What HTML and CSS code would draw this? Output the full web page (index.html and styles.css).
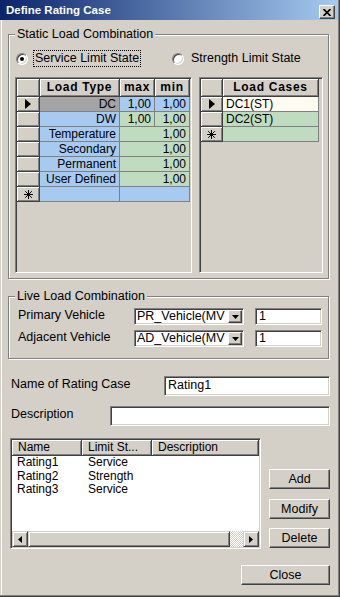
FILE: index.html
```html
<!DOCTYPE html>
<html lang="en">
<head>
    <meta charset="UTF-8">
    <meta name="viewport" content="width=device-width, initial-scale=1.0">
    <title>Define Rating Case</title>
    <link rel="stylesheet" href="styles.css">
</head>
<body>
<div class="window">
    <!-- Title Bar -->
    <div class="titlebar">
        <span class="title">Define Rating Case</span>
        <span class="close-x">
            <svg width="8" height="7" viewBox="0 0 8 7"><path d="M0.5 0 L7.5 7 M7.5 0 L0.5 7" stroke="#000" stroke-width="1.7"/></svg>
        </span>
    </div>

    <!-- Static Load Combination -->
    <div class="group static">
        <div class="legend">Static Load Combination</div>
        <div class="radios">
            <div class="radio-opt first">
                <span class="radio checked"></span>
                <span class="radio-label focus">Service Limit State</span>
            </div>
            <div class="radio-opt">
                <span class="radio"></span>
                <span class="radio-label">Strength Limit State</span>
            </div>
        </div>
        <div class="panels">
            <div class="panel panel-left">
                <div class="grid grid-left">
                    <div class="cell hd"></div>
                    <div class="cell hd">Load Type</div>
                    <div class="cell hd">max</div>
                    <div class="cell hd">min</div>

                    <div class="cell rh"><svg width="6" height="10" viewBox="0 0 6 10"><polygon points="0,0 6,5 0,10" fill="#000"/></svg></div>
                    <div class="cell gray">DC</div>
                    <div class="cell blue">1,00</div>
                    <div class="cell blue">1,00</div>

                    <div class="cell rh"></div>
                    <div class="cell blue">DW</div>
                    <div class="cell green">1,00</div>
                    <div class="cell green">1,00</div>

                    <div class="cell rh"></div>
                    <div class="cell blue">Temperature</div>
                    <div class="cell green span2">1,00</div>

                    <div class="cell rh"></div>
                    <div class="cell blue">Secondary</div>
                    <div class="cell green span2">1,00</div>

                    <div class="cell rh"></div>
                    <div class="cell blue">Permanent</div>
                    <div class="cell green span2">1,00</div>

                    <div class="cell rh"></div>
                    <div class="cell blue">User Defined</div>
                    <div class="cell green span2">1,00</div>

                    <div class="cell rh new"><svg width="9" height="9" viewBox="0 0 9 9"><path d="M4.5 0 V9 M0 4.5 H9 M1.2 1.2 L7.8 7.8 M7.8 1.2 L1.2 7.8" stroke="#000" stroke-width="1"/></svg></div>
                    <div class="cell blue"></div>
                    <div class="cell blue span2"></div>
                </div>
            </div>
            <div class="panel panel-right">
                <div class="grid grid-right">
                    <div class="cell hd"></div>
                    <div class="cell hd">Load Cases</div>

                    <div class="cell rh"><svg width="6" height="10" viewBox="0 0 6 10"><polygon points="0,0 6,5 0,10" fill="#000"/></svg></div>
                    <div class="cell cream left">DC1(ST)</div>

                    <div class="cell rh"></div>
                    <div class="cell green left">DC2(ST)</div>

                    <div class="cell rh new"><svg width="9" height="9" viewBox="0 0 9 9"><path d="M4.5 0 V9 M0 4.5 H9 M1.2 1.2 L7.8 7.8 M7.8 1.2 L1.2 7.8" stroke="#000" stroke-width="1"/></svg></div>
                    <div class="cell green left"></div>
                </div>
            </div>
        </div>
    </div>

    <!-- Live Load Combination -->
    <div class="group live">
        <div class="legend">Live Load Combination</div>
        <div class="live-row">
            <span class="live-label">Primary Vehicle</span>
            <div class="combo">
                <span class="combo-text">PR_Vehicle(MV</span>
                <span class="combo-btn"><svg width="7" height="4" viewBox="0 0 7 4"><polygon points="0,0 7,0 3.5,4" fill="#000"/></svg></span>
            </div>
            <div class="textbox num">1</div>
        </div>
        <div class="live-row second">
            <span class="live-label">Adjacent Vehicle</span>
            <div class="combo">
                <span class="combo-text">AD_Vehicle(MV</span>
                <span class="combo-btn"><svg width="7" height="4" viewBox="0 0 7 4"><polygon points="0,0 7,0 3.5,4" fill="#000"/></svg></span>
            </div>
            <div class="textbox num">1</div>
        </div>
    </div>

    <!-- Name / Description -->
    <div class="field-row name-row">
        <span class="field-label name-label">Name of Rating Case</span>
        <div class="textbox name-box">Rating1</div>
    </div>
    <div class="field-row desc-row">
        <span class="field-label desc-label">Description</span>
        <div class="textbox desc-box"></div>
    </div>

    <!-- Rating case list -->
    <div class="list-row">
        <div class="listview">
            <div class="lv-header">
                <div class="lv-col c1">Name</div>
                <div class="lv-col c2">Limit St...</div>
                <div class="lv-col c3">Description</div>
            </div>
            <div class="lv-body">
                <div class="lv-item"><span class="c1">Rating1</span><span class="c2">Service</span></div>
                <div class="lv-item"><span class="c1">Rating2</span><span class="c2">Strength</span></div>
                <div class="lv-item"><span class="c1">Rating3</span><span class="c2">Service</span></div>
            </div>
            <div class="hscroll">
                <div class="sb-btn"><svg width="4" height="7" viewBox="0 0 4 7"><polygon points="4,0 4,7 0,3.5" fill="#000"/></svg></div>
                <div class="sb-thumb"></div>
                <div class="sb-track"></div>
                <div class="sb-btn"><svg width="4" height="7" viewBox="0 0 4 7"><polygon points="0,0 4,3.5 0,7" fill="#000"/></svg></div>
            </div>
        </div>
        <div class="side-buttons">
            <button class="btn add">Add</button>
            <button class="btn modify">Modify</button>
            <button class="btn delete">Delete</button>
        </div>
    </div>

    <div class="footer">
        <button class="btn close">Close</button>
    </div>
</div>
</body>
</html>
```

FILE: styles.css
```css
/* General */
body {
    margin: 0;
    padding: 0;
    font-family: 'Liberation Sans', Arial, sans-serif;
    font-size: 12.5px;
    color: #000;
    background: #d4d0c8;
}

.window {
    width: 340px;
    height: 597px;
    box-sizing: border-box;
    background: #d4d0c8;
    box-shadow: inset -1px -1px 0 #404040, inset -2px -2px 0 #808080, inset 1px 0 0 #d4d0c8, inset 2px 0 0 #fff;
    overflow: hidden;
}

/* Title bar */
.titlebar {
    width: 338px;
    height: 20px;
    display: flex;
    justify-content: space-between;
    align-items: flex-start;
    background: linear-gradient(to right, #0a246a, #a6caf0);
}

.titlebar .title {
    color: #fff;
    font-weight: bold;
    font-size: 11.5px;
    line-height: 20px;
    padding-left: 6px;
}

.close-x {
    width: 16px;
    height: 14px;
    box-sizing: border-box;
    margin: 5px 3px 0 0;
    display: flex;
    align-items: center;
    justify-content: center;
    background: #d4d0c8;
    border: 1px solid;
    border-color: #fff #404040 #404040 #fff;
    box-shadow: inset -1px -1px 0 #808080;
}

/* Group boxes */
.group {
    box-sizing: border-box;
    margin-left: 8px;
    width: 321px;
    border: 1px solid #808080;
    box-shadow: inset 1px 1px 0 #fff, 1px 1px 0 #fff;
}

.group .legend {
    width: fit-content;
    margin: -8px 0 0 6px;
    padding: 0 2px;
    line-height: 14px;
    background: #d4d0c8;
}

.static {
    margin-top: 14px;
    height: 245px;
}

/* Radios */
.radios {
    display: flex;
    margin: 9px 0 0 7px;
    height: 17px;
}

.radio-opt {
    display: flex;
    align-items: center;
}

.radio-opt.first {
    width: 156px;
}

.radio {
    width: 12px;
    height: 12px;
    box-sizing: border-box;
    border-radius: 50%;
    background: #fff;
    border: 1px solid;
    border-color: #808080 #fff #fff #808080;
    box-shadow: inset 1px 1px 0 #404040, inset -1px -1px 0 #d4d0c8;
    display: flex;
    align-items: center;
    justify-content: center;
}

.radio.checked::after {
    content: "";
    width: 4px;
    height: 4px;
    border-radius: 50%;
    background: #000;
}

.radio-label {
    margin-left: 5px;
    padding: 0 1px;
    line-height: 15px;
    border: 1px solid transparent;
}

.radio-label.focus {
    border: 1px dotted #000;
}

/* Grid panels */
.panels {
    display: flex;
    gap: 7px;
    margin: 10px 0 0 6px;
}

.panel {
    height: 196px;
    box-sizing: border-box;
    border: 1px solid;
    border-color: #808080 #fff #fff #808080;
    box-shadow: inset 1px 1px 0 #404040, inset -1px -1px 0 #d4d0c8;
    padding: 1px;
}

.panel-left {
    width: 177px;
}

.panel-right {
    width: 124px;
}

.grid {
    display: grid;
    font-size: 12px;
    line-height: 14px;
}

.grid-left {
    grid-template-columns: 23px 80px 35px 35px;
}

.grid-right {
    grid-template-columns: 22px 96px;
}

.cell {
    box-sizing: border-box;
    height: 15px;
    padding: 0 3px;
    text-align: right;
    white-space: nowrap;
    overflow: hidden;
    border-right: 1px solid #808080;
    border-bottom: 1px solid #808080;
}

.cell.left {
    text-align: left;
}

.cell.span2 {
    grid-column: span 2;
}

.cell.hd {
    height: 18px;
    line-height: 16px;
    background: #d4d0c8;
    font-weight: bold;
    letter-spacing: 0.7px;
    text-align: center;
    border-right-color: #404040;
    border-bottom-color: #404040;
    box-shadow: inset 1px 1px 0 #fff, inset -1px -1px 0 #808080;
}

.cell.rh {
    padding: 0;
    display: flex;
    align-items: center;
    justify-content: center;
    background: #d4d0c8;
    border-right-color: #404040;
    border-bottom-color: #404040;
    box-shadow: inset 1px 1px 0 #fff, inset -1px -1px 0 #808080;
}

.blue { background: #a6caf0; }
.green { background: #c0dcc0; }
.gray { background: #a4a4a4; }
.cream { background: #fffbf0; }

/* Live load */
.live {
    margin-top: 17px;
    height: 63px;
}

.live-row {
    display: flex;
    align-items: flex-start;
    margin: 5px 0 0 9px;
    height: 17px;
}

.live-label {
    width: 116px;
    line-height: 14px;
}

.combo,
.textbox {
    box-sizing: border-box;
    background: #fff;
    border: 1px solid;
    border-color: #808080 #fff #fff #808080;
    box-shadow: inset 1px 1px 0 #404040, inset -1px -1px 0 #d4d0c8;
}

.combo {
    width: 110px;
    height: 17px;
    padding: 1px;
    display: flex;
}

.combo-text {
    flex: 1;
    min-width: 0;
    white-space: nowrap;
    line-height: 13px;
    padding-left: 1px;
}

.combo-btn {
    width: 14px;
    height: 13px;
    box-sizing: border-box;
    display: flex;
    align-items: center;
    justify-content: center;
    background: #d4d0c8;
    border: 1px solid;
    border-color: #fff #404040 #404040 #fff;
    box-shadow: inset -1px -1px 0 #808080;
}

.textbox {
    padding: 2px 3px;
    line-height: 13px;
    white-space: nowrap;
    overflow: hidden;
}

.textbox.num {
    width: 67px;
    height: 17px;
    margin-left: 11px;
    padding-top: 1px;
}

/* Name / Description */
.field-row {
    display: flex;
    align-items: flex-start;
    margin-left: 11px;
}

.field-label {
    line-height: 16px;
}

.name-row {
    margin-top: 17px;
}

.name-label {
    width: 153px;
}

.name-box {
    width: 166px;
    height: 20px;
}

.desc-row {
    margin-top: 10px;
}

.desc-label {
    width: 99px;
}

.desc-box {
    width: 220px;
    height: 20px;
}

/* List view */
.list-row {
    display: flex;
    margin: 12px 0 0 10px;
}

.listview {
    width: 251px;
    height: 111px;
    box-sizing: border-box;
    background: #fff;
    border: 1px solid;
    border-color: #808080 #fff #fff #808080;
    box-shadow: inset 1px 1px 0 #404040, inset -1px -1px 0 #d4d0c8;
    padding: 1px;
    display: flex;
    flex-direction: column;
    font-size: 12px;
}

.lv-header {
    display: flex;
    height: 16px;
    flex-shrink: 0;
}

.lv-col {
    box-sizing: border-box;
    height: 16px;
    line-height: 14px;
    padding-left: 6px;
    background: #d4d0c8;
    border-right: 1px solid #404040;
    border-bottom: 1px solid #404040;
    box-shadow: inset 1px 1px 0 #fff, inset -1px -1px 0 #808080;
    white-space: nowrap;
}

.lv-col.c1,
.lv-col.c2 {
    width: 70px;
}

.lv-col.c3 {
    flex: 1;
}

.lv-body {
    flex: 1;
}

.lv-item {
    display: flex;
    height: 13.5px;
    line-height: 13.5px;
}

.lv-item .c1 {
    width: 70px;
    padding-left: 5px;
    box-sizing: border-box;
}

.lv-item .c2 {
    padding-left: 6px;
}

/* Horizontal scroll bar */
.hscroll {
    display: flex;
    height: 16px;
    flex-shrink: 0;
}

.sb-btn,
.sb-thumb {
    box-sizing: border-box;
    height: 16px;
    background: #d4d0c8;
    border: 1px solid;
    border-color: #d4d0c8 #404040 #404040 #d4d0c8;
    box-shadow: inset 1px 1px 0 #fff, inset -1px -1px 0 #808080;
}

.sb-btn {
    width: 16px;
    display: flex;
    align-items: center;
    justify-content: center;
}

.sb-thumb {
    width: 202px;
}

.sb-track {
    flex: 1;
    background-color: #d4d0c8;
    background-image: conic-gradient(#fff 25%, #d4d0c8 0 50%, #fff 0 75%, #d4d0c8 0);
    background-size: 2px 2px;
}

/* Buttons */
.side-buttons {
    display: flex;
    flex-direction: column;
    margin-left: 8px;
    padding-top: 31px;
}

.btn {
    width: 61px;
    height: 20px;
    box-sizing: border-box;
    padding: 0;
    font: inherit;
    color: #000;
    background: #d4d0c8;
    border: 1px solid;
    border-color: #fff #404040 #404040 #fff;
    box-shadow: inset -1px -1px 0 #808080;
}

.btn.modify {
    margin-top: 10px;
}

.btn.delete {
    margin-top: 9px;
}

.footer {
    margin: 16px 0 0 241px;
}

.btn.close {
    width: 89px;
}
```
